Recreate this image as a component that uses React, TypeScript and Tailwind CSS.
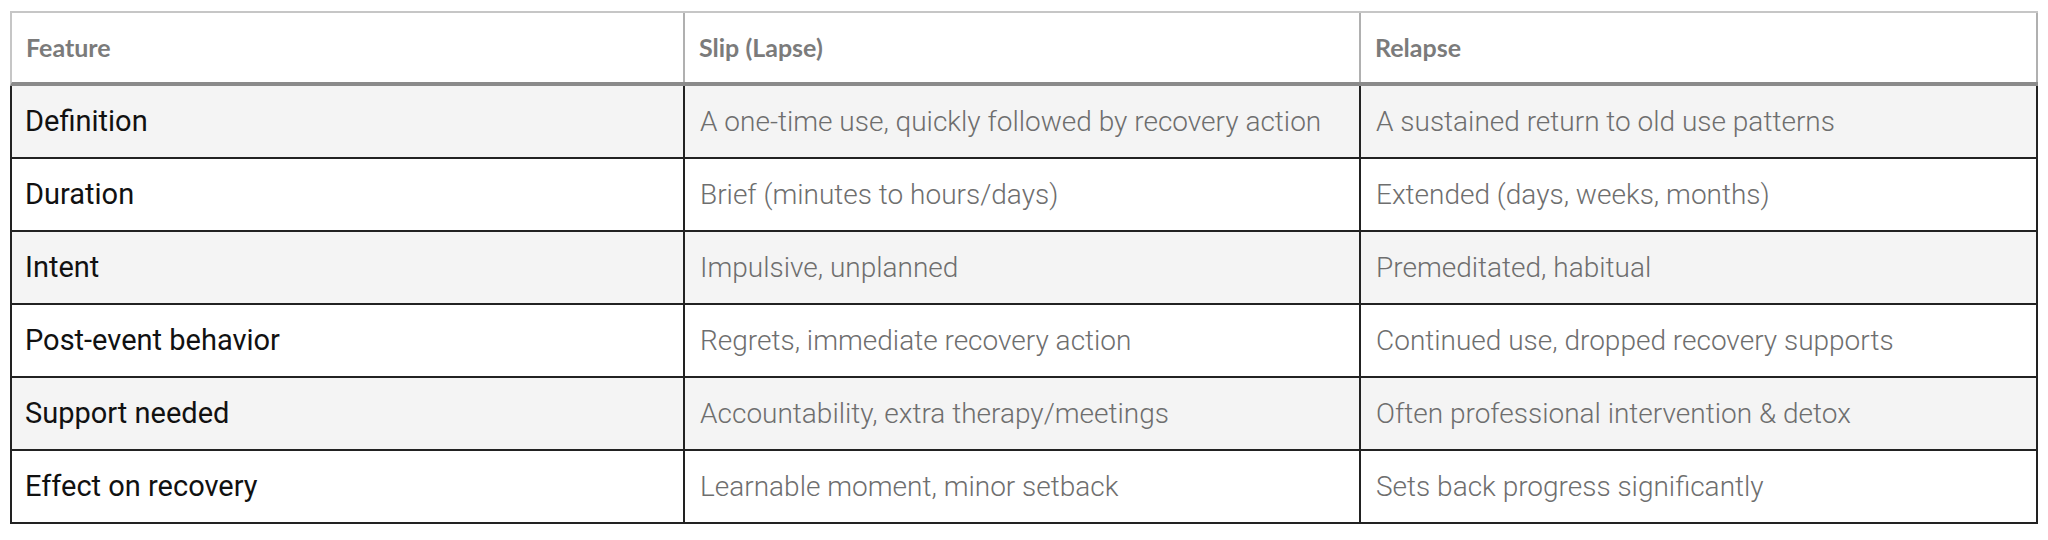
import React from "react";

const rows = [
  ["Definition", "A one-time use, quickly followed by recovery action", "A sustained return to old use patterns"],
  ["Duration", "Brief (minutes to hours/days)", "Extended (days, weeks, months)"],
  ["Intent", "Impulsive, unplanned", "Premeditated, habitual"],
  ["Post-event behavior", "Regrets, immediate recovery action", "Continued use, dropped recovery supports"],
  ["Support needed", "Accountability, extra therapy/meetings", "Often professional intervention & detox"],
  ["Effect on recovery", "Learnable moment, minor setback", "Sets back progress significantly"],
];

export default function App() {
  return (
    <div className="bg-white w-[2048px] h-[540px] pl-[10px] pt-[11px]">
      <div className="w-[2028px]">
        {/* header */}
        <div className="grid grid-cols-[673px_676px_1fr] border-t-2 border-l-2 border-[#c6c6c6] border-b-4 border-b-[#8a8a8a] bg-white">
          {["Feature", "Slip (Lapse)", "Relapse"].map((h) => (
            <div
              key={h}
              className="h-[69px] flex items-center px-[14px] border-r-2 border-[#b0b0b0] text-[25px] font-bold text-[#7b7b7b] font-['Lato',sans-serif]"
            >
              {h}
            </div>
          ))}
        </div>

        {/* body */}
        {rows.map((r, i) => (
          <div
            key={r[0]}
            className={`grid grid-cols-[673px_676px_1fr] border-l-2 border-[#222] ${i % 2 === 0 ? "bg-[#f4f4f4]" : "bg-white"}`}
          >
            <div className="h-[73px] flex items-center px-[13px] border-r-2 border-b-2 border-[#222] text-[29px] text-[#111] font-['Roboto',sans-serif]">
              {r[0]}
            </div>
            <div className="h-[73px] flex items-center px-[15px] border-r-2 border-b-2 border-[#222] text-[28px] font-light text-[#6e6e6e] font-['Roboto',sans-serif]">
              {r[1]}
            </div>
            <div className="h-[73px] flex items-center px-[15px] border-r-2 border-b-2 border-[#222] text-[28px] font-light text-[#6e6e6e] font-['Roboto',sans-serif]">
              {r[2]}
            </div>
          </div>
        ))}
      </div>
    </div>
  );
}
